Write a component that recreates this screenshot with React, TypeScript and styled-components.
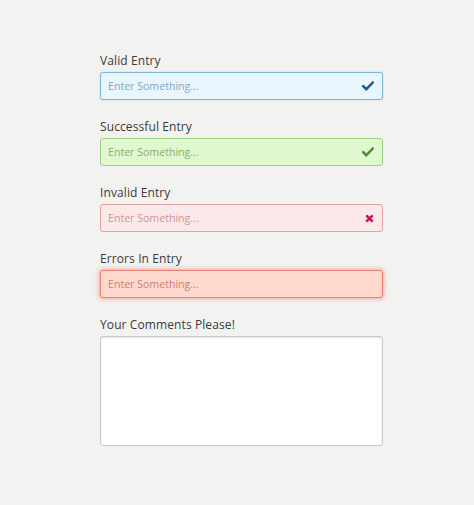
import styled, { createGlobalStyle, css } from 'styled-components';

const GlobalStyle = createGlobalStyle`
  html, body { margin: 0; padding: 0; background: #f2f2f0; }
  body { font-family: "Open Sans", "DejaVu Sans", sans-serif; }
`;

type Variant = 'valid' | 'success' | 'invalid' | 'error';

const palette: Record<Variant, { bg: string; border: string; text: string; icon: string }> = {
  valid: { bg: '#e9f5fc', border: '#7fb6d8', text: '#7fa9c2', icon: '#1d5a85' },
  success: { bg: '#dff8cf', border: '#9dcf7f', text: '#8aad74', icon: '#4c8a2e' },
  invalid: { bg: '#fbe9e9', border: '#e2a0a0', text: '#cf9494', icon: '#c2105f' },
  error: { bg: '#fed9cd', border: '#e6806f', text: '#cc8072', icon: '#c2105f' },
};

const Page = styled.div`
  width: 474px;
  height: 505px;
  box-sizing: border-box;
  padding: 53px 0 0 100px;
`;

const Form = styled.form`
  width: 283px;
  display: flex;
  flex-direction: column;
  gap: 19px;
`;

const Field = styled.div`
  display: flex;
  flex-direction: column;
  gap: 3px;
`;

const Label = styled.label`
  font-size: 12px;
  line-height: 16px;
  color: #3a3a3a;
  letter-spacing: 0.1px;
`;

const InputWrap = styled.div`
  position: relative;
  height: 28px;
`;

const Input = styled.input<{ $variant: Variant }>`
  box-sizing: border-box;
  width: 100%;
  height: 28px;
  padding: 0 28px 0 7px;
  font-family: inherit;
  font-size: 10.6px;
  border-radius: 3px;
  outline: none;
  ${({ $variant }) => css`
    background: ${palette[$variant].bg};
    border: 1px solid ${palette[$variant].border};
    color: ${palette[$variant].text};
    &::placeholder { color: ${palette[$variant].text}; opacity: 1; }
  `}
  ${({ $variant }) =>
    $variant === 'error' &&
    css`
      box-shadow: 0 0 4px 1px rgba(232, 110, 90, 0.55);
    `}
  ${({ $variant }) =>
    $variant === 'valid' &&
    css`
      box-shadow: 0 0 2px rgba(110, 170, 210, 0.4);
    `}
`;

const Icon = styled.span<{ $variant: Variant }>`
  position: absolute;
  right: 9px;
  top: 0;
  height: 28px;
  display: flex;
  align-items: center;
  color: ${({ $variant }) => palette[$variant].icon};
`;

const TextArea = styled.textarea`
  box-sizing: border-box;
  width: 283px;
  height: 110px;
  background: #fff;
  border: 1px solid #c8c8c8;
  border-radius: 3px;
  box-shadow: inset 0 1px 2px rgba(0, 0, 0, 0.12);
  resize: none;
  outline: none;
  font-family: inherit;
`;

const Check = () => (
  <svg width="12" height="10" viewBox="0 0 12 10">
    <path d="M1.2 5.2 L4.3 8.2 L10.8 1.6" fill="none" stroke="currentColor" strokeWidth="2.4" strokeLinecap="square" />
  </svg>
);

const Cross = () => (
  <svg width="9" height="9" viewBox="0 0 9 9">
    <path d="M1.3 1.3 L7.7 7.7 M7.7 1.3 L1.3 7.7" fill="none" stroke="currentColor" strokeWidth="2.4" />
  </svg>
);

const fields: { label: string; variant: Variant; icon?: 'check' | 'cross' }[] = [
  { label: 'Valid Entry', variant: 'valid', icon: 'check' },
  { label: 'Successful Entry', variant: 'success', icon: 'check' },
  { label: 'Invalid Entry', variant: 'invalid', icon: 'cross' },
  { label: 'Errors In Entry', variant: 'error' },
];

const App = () => (
  <>
    <GlobalStyle />
    <Page>
      <Form>
        {fields.map((f) => (
          <Field key={f.label}>
            <Label>{f.label}</Label>
            <InputWrap>
              <Input $variant={f.variant} placeholder="Enter Something..." />
              {f.icon && (
                <Icon $variant={f.variant}>{f.icon === 'check' ? <Check /> : <Cross />}</Icon>
              )}
            </InputWrap>
          </Field>
        ))}
        <Field>
          <Label>Your Comments Please!</Label>
          <TextArea />
        </Field>
      </Form>
    </Page>
  </>
);

export default App;
